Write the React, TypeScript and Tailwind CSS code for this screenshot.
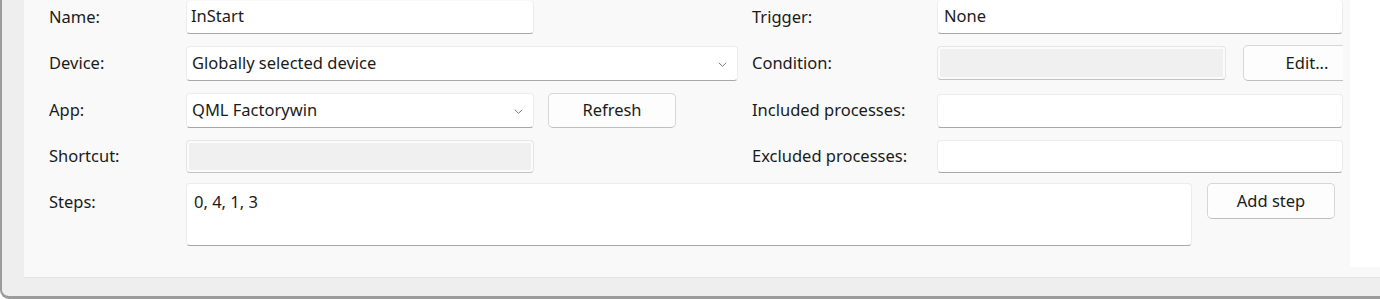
import { ReactNode } from 'react';

const field =
	'bg-white border border-[#ececec] border-b-[#a8a8a8] rounded-[4px] flex items-center';
const disabled =
	'bg-[#f0f0f0] border border-[#e6e6e6] border-b-[#c2c2c2] rounded-[4px] shadow-[inset_0_0_0_2px_#fbfbfb]';
const button =
	'bg-[#fdfdfd] border border-[#d6d6d6] border-b-[#bfbfbf] rounded-[5px] flex items-center justify-center shrink-0';

const Chevron = () => (
	<svg width="9" height="5" viewBox="0 0 9 5" className="shrink-0 mt-[2px]">
		<path d="M0.8 0.8 L4.5 4.3 L8.2 0.8" fill="none" stroke="#7a7a7a" strokeWidth="1" />
	</svg>
);

const Combo = ({ text, width }: { text: string; width: string }) => (
	<div className={`${field} ${width} h-[35px] pl-[5px] pr-[10px] justify-between`}>
		<span>{text}</span>
		<Chevron />
	</div>
);

const Row = ({
	label,
	left,
	rightLabel,
	right,
	className,
}: {
	label: string;
	left: ReactNode;
	rightLabel: string;
	right: ReactNode;
	className: string;
}) => (
	<div className={`flex items-center ${className}`}>
		<div className="w-[137px] shrink-0">{label}</div>
		<div className="w-[552px] shrink-0 flex items-center">{left}</div>
		<div className="w-[185px] shrink-0 ml-[14px]">{rightLabel}</div>
		<div className="flex-1 min-w-0 flex items-center">{right}</div>
	</div>
);

export default function App() {
	return (
		<div className="w-[1380px] h-[299px] bg-[#eeeeee] border-l-2 border-b-[3px] border-[#9b9b9b] rounded-bl-[9px] overflow-hidden flex flex-col font-['Noto_Sans',sans-serif] text-[16.5px] text-[#1b1b1b] leading-none">
			<div className="ml-[22px] h-[278px] bg-[#f9f9f9] border-b border-[#e3e3e3] flex items-start shrink-0">
				<div className="w-[1326px] pl-[25px] pr-[7px] shrink-0">
					<div className="w-[1294px] overflow-hidden">
						<Row
							className="h-[34px]"
							label="Name:"
							left={
								<div className={`${field} w-[348px] h-[33px] pl-[4px] self-start border-t-0`}>
									InStart
								</div>
							}
							rightLabel="Trigger:"
							right={
								<div className={`${field} w-full h-[34px] pl-[6px] border-t-0`}>None</div>
							}
						/>
						<Row
							className="h-[36px] mt-[11px]"
							label="Device:"
							left={<Combo text="Globally selected device" width="w-full" />}
							rightLabel="Condition:"
							right={
								<>
									<div className={`${disabled} w-[289px] h-[34px] shrink-0`} />
									<div className={`${button} w-[128px] h-[36px] ml-[17px]`}>
										Edit...
									</div>
								</>
							}
						/>
						<Row
							className="h-[36px] mt-[11px]"
							label="App:"
							left={
								<>
									<Combo text="QML Factorywin" width="w-[348px]" />
									<div className={`${button} w-[128px] h-[35px] ml-[14px]`}>
										Refresh
									</div>
								</>
							}
							rightLabel="Included processes:"
							right={<div className={`${field} w-full h-[34px] mt-[2px]`} />}
						/>
						<Row
							className="h-[33px] mt-[12px]"
							label="Shortcut:"
							left={<div className={`${disabled} w-[348px] h-[33px]`} />}
							rightLabel="Excluded processes:"
							right={<div className={`${field} w-full h-[33px]`} />}
						/>
						<div className="flex items-start mt-[10px]">
							<div className="w-[137px] shrink-0 pt-[11px]">Steps:</div>
							<div className="w-[1006px] h-[63px] bg-white border border-[#ececec] border-b-[#a8a8a8] rounded-[4px] pl-[7px] pt-[10px] shrink-0">
								0, 4, 1, 3
							</div>
							<div className={`${button} w-[128px] h-[36px] ml-[15px]`}>Add step</div>
						</div>
					</div>
				</div>
				<div className="w-[30px] h-[267px] bg-white shrink-0" />
			</div>
			<div className="flex-1" />
		</div>
	);
}
